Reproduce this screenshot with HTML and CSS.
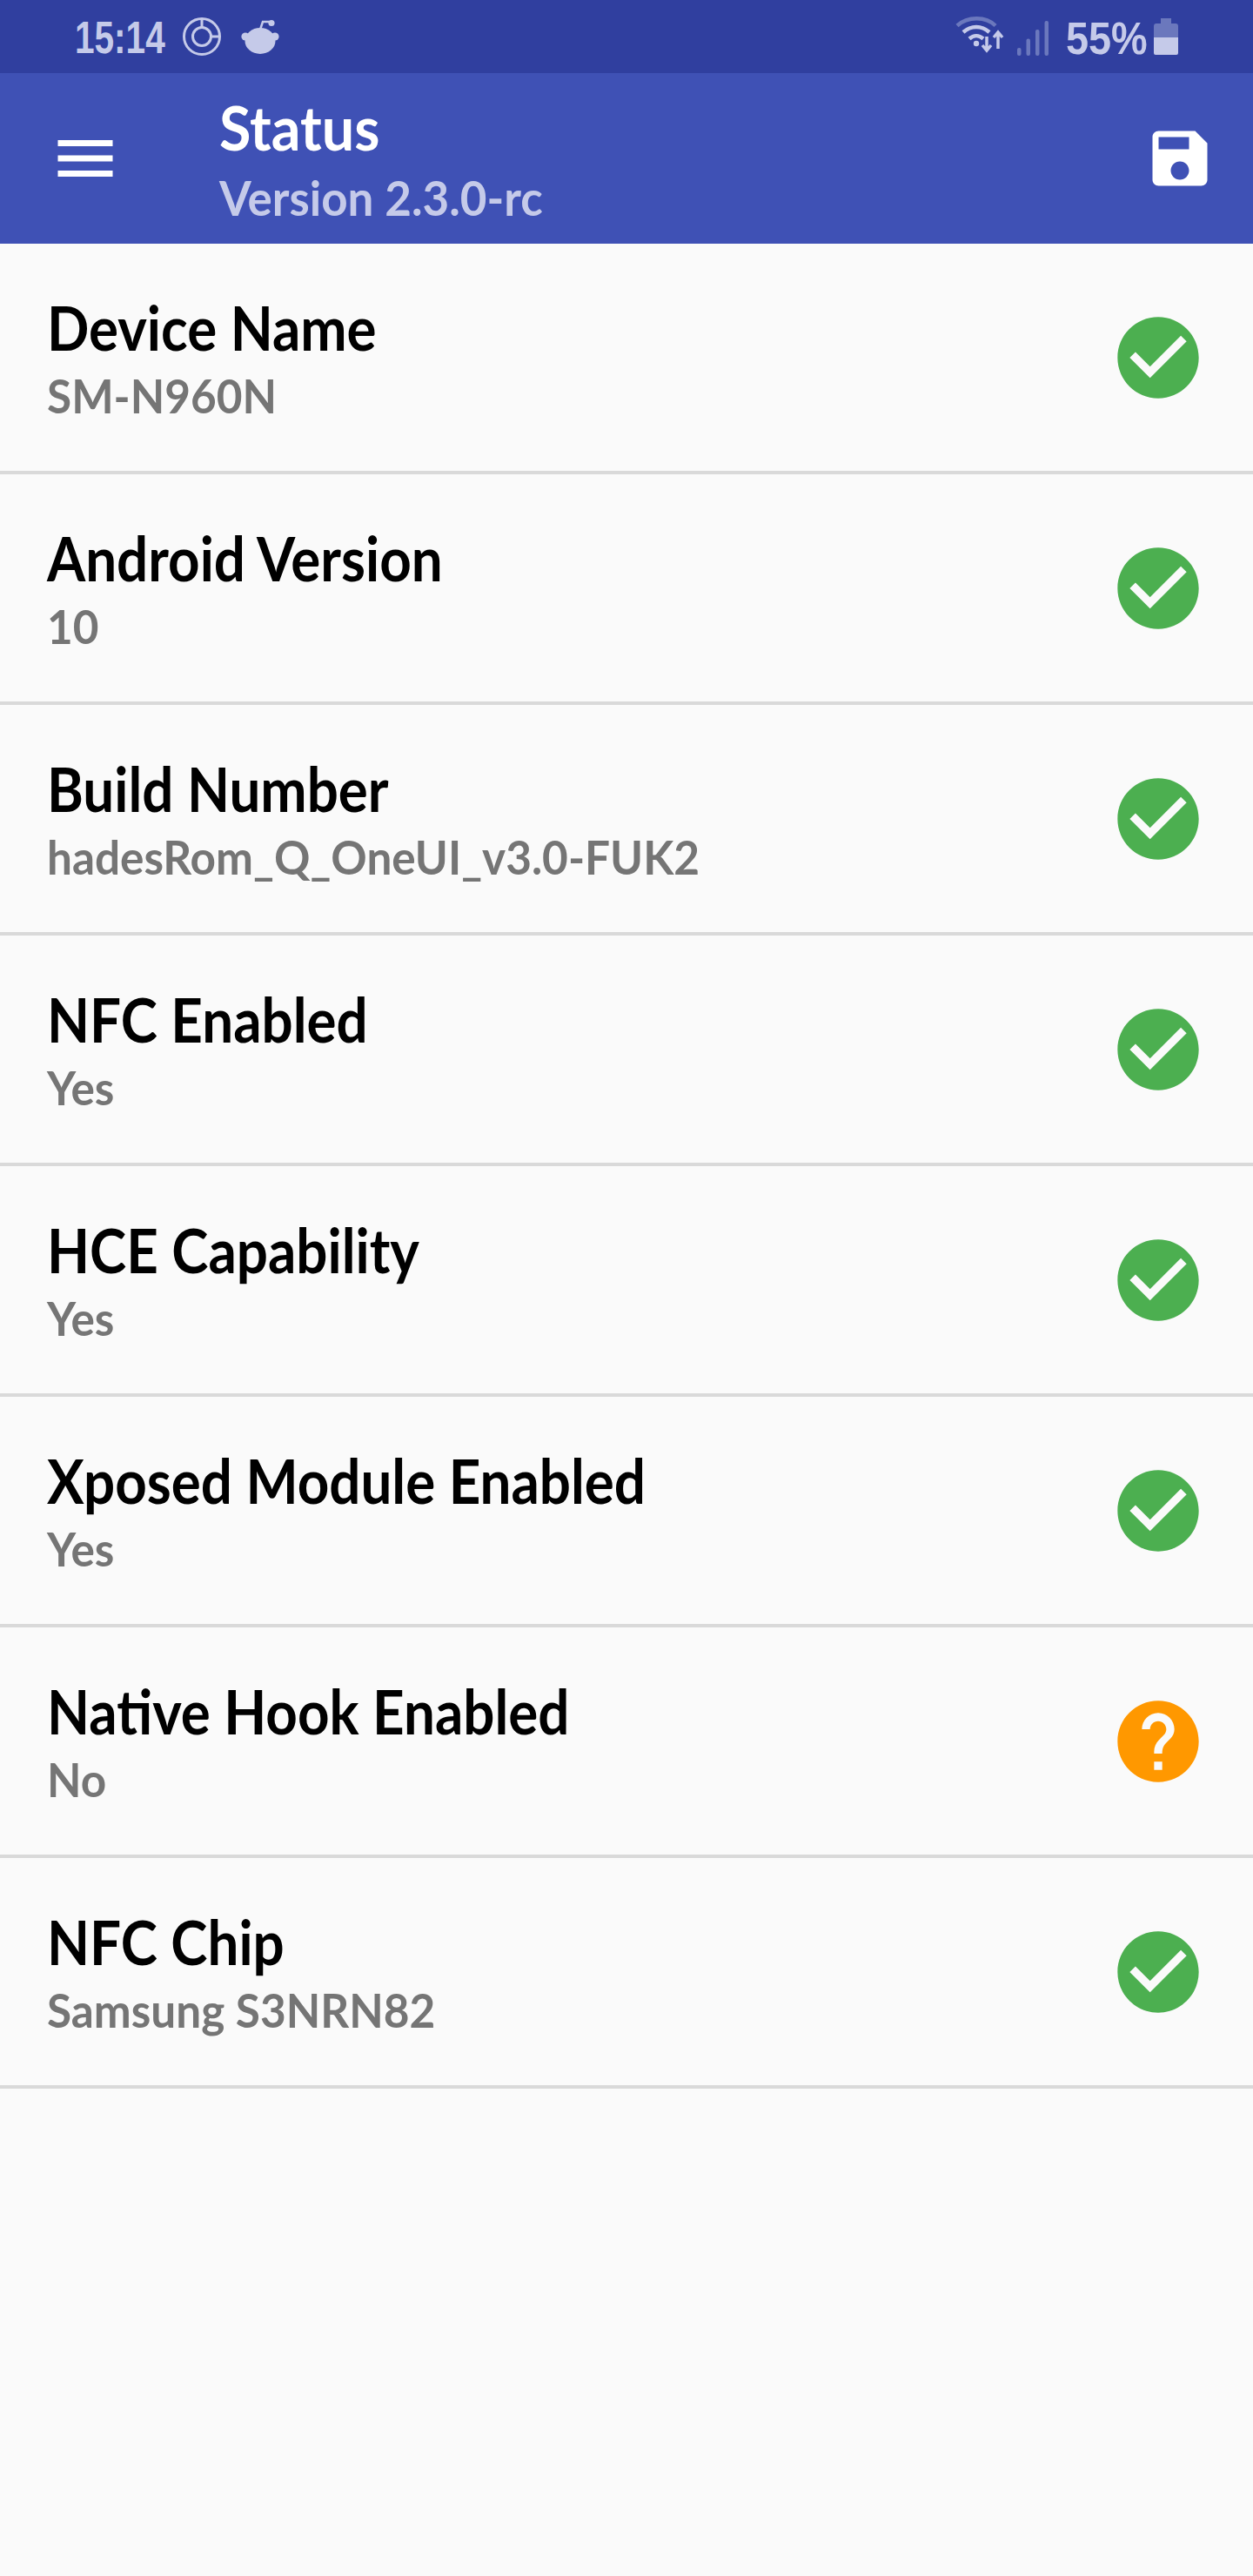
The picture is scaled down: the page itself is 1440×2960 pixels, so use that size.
FILE: index.html
```html
<!DOCTYPE html>
<html lang="en">
<head>
<meta charset="utf-8">
<title>Status</title>
<link rel="stylesheet" href="styles.css">
</head>
<body>
<div class="app">
  <header class="statusbar">
    <div class="status-left">
      <span class="clock">15:14</span>
      <svg class="ic-target" viewBox="0 0 46 46"><circle cx="23" cy="23" r="20.5"/><circle cx="23" cy="23" r="10.5"/><path d="M23 2.5V12.5M33.5 23H43.5"/></svg>
      <svg class="ic-reddit" viewBox="0 0 44 40"><circle cx="5" cy="20" r="4.6"/><circle cx="39" cy="20" r="4.6"/><ellipse cx="22" cy="25" rx="17.5" ry="15"/><path class="antenna" d="M22 12L25 3H33"/><circle cx="35" cy="4.5" r="3.6"/></svg>
    </div>
    <div class="status-right">
      <svg class="ic-wifi" viewBox="0 0 60 44"><path class="arc dim" d="M3 10.5C15-.5 36-.5 47 10.5"/><path class="arc" d="M10 18C19 10 31 10 40 18"/><path class="arc" d="M17 25.5C22 21 28 21 33 25.5"/><circle cx="25" cy="31" r="3.2"/><path class="arrow" d="M37 23V38M32 33L37 39L42 33M50 37V18M45 24L50 18L55 24"/></svg>
      <svg class="ic-signal" viewBox="0 0 37 40"><rect x="0" y="31" width="4.5" height="9" rx="2"/><rect x="10.500" y="20.500" width="4.500" height="19.500" rx="2"/><rect x="21" y="10" width="4.500" height="30" rx="2"/><rect x="31.500" y="0" width="4.500" height="40" rx="2"/></svg>
      <span class="pct">55%</span>
      <svg class="ic-battery" viewBox="0 0 28 42"><path class="dim-fill" d="M8 0H20V6H25Q28 6 28 9V22H0V9Q0 6 3 6H8Z"/><path d="M0 22H28V40Q28 42 26 42H2Q0 42 0 40Z"/></svg>
    </div>
  </header>

  <div class="toolbar">
    <svg class="tb-icon" viewBox="0 0 24 24"><path d="M3 18h18v-2H3v2zm0-5h18v-2H3v2zm0-7v2h18V6H3z"/></svg>
    <div class="tb-titles">
      <div class="tb-title"><span>Status</span></div>
      <div class="tb-sub"><span>Version 2.3.0-rc</span></div>
    </div>
    <svg class="tb-icon" viewBox="0 0 24 24"><path d="M17 3H5c-1.11 0-2 .9-2 2v14c0 1.1.89 2 2 2h14c1.1 0 2-.9 2-2V7l-4-4zm-5 16c-1.66 0-3-1.34-3-3s1.34-3 3-3 3 1.34 3 3-1.34 3-3 3zm3-10H5V5h10v4z"/></svg>
  </div>

  <main class="list">
    <div class="row"><div class="row-text"><div class="row-title"><span>Device Name</span></div><div class="row-sub"><span>SM-N960N</span></div></div><svg class="state ok" viewBox="0 0 24 24"><path d="M12 2C6.48 2 2 6.48 2 12s4.48 10 10 10 10-4.48 10-10S17.52 2 12 2zm-2 15l-5-5 1.41-1.41L10 14.170l7.590-7.590L19 8l-9 9z"/></svg></div>
    <div class="row"><div class="row-text"><div class="row-title"><span>Android Version</span></div><div class="row-sub"><span>10</span></div></div><svg class="state ok" viewBox="0 0 24 24"><path d="M12 2C6.48 2 2 6.48 2 12s4.48 10 10 10 10-4.48 10-10S17.52 2 12 2zm-2 15l-5-5 1.41-1.41L10 14.170l7.590-7.590L19 8l-9 9z"/></svg></div>
    <div class="row"><div class="row-text"><div class="row-title"><span>Build Number</span></div><div class="row-sub"><span>hadesRom_Q_OneUI_v3.0-FUK2</span></div></div><svg class="state ok" viewBox="0 0 24 24"><path d="M12 2C6.48 2 2 6.48 2 12s4.48 10 10 10 10-4.48 10-10S17.52 2 12 2zm-2 15l-5-5 1.41-1.41L10 14.170l7.590-7.590L19 8l-9 9z"/></svg></div>
    <div class="row"><div class="row-text"><div class="row-title"><span>NFC Enabled</span></div><div class="row-sub"><span>Yes</span></div></div><svg class="state ok" viewBox="0 0 24 24"><path d="M12 2C6.48 2 2 6.48 2 12s4.48 10 10 10 10-4.48 10-10S17.52 2 12 2zm-2 15l-5-5 1.41-1.41L10 14.170l7.590-7.590L19 8l-9 9z"/></svg></div>
    <div class="row"><div class="row-text"><div class="row-title"><span>HCE Capability</span></div><div class="row-sub"><span>Yes</span></div></div><svg class="state ok" viewBox="0 0 24 24"><path d="M12 2C6.48 2 2 6.48 2 12s4.48 10 10 10 10-4.48 10-10S17.52 2 12 2zm-2 15l-5-5 1.41-1.41L10 14.170l7.590-7.590L19 8l-9 9z"/></svg></div>
    <div class="row"><div class="row-text"><div class="row-title"><span>Xposed Module Enabled</span></div><div class="row-sub"><span>Yes</span></div></div><svg class="state ok" viewBox="0 0 24 24"><path d="M12 2C6.48 2 2 6.48 2 12s4.48 10 10 10 10-4.48 10-10S17.52 2 12 2zm-2 15l-5-5 1.41-1.41L10 14.170l7.590-7.590L19 8l-9 9z"/></svg></div>
    <div class="row"><div class="row-text"><div class="row-title"><span>Native Hook Enabled</span></div><div class="row-sub"><span>No</span></div></div><svg class="state warn" viewBox="0 0 24 24"><path d="M12 2C6.48 2 2 6.48 2 12s4.48 10 10 10 10-4.48 10-10S17.52 2 12 2zm1 17h-2v-2h2v2zm2.070-7.750l-.9.920C13.450 12.900 13 13.500 13 15h-2v-.5c0-1.100.45-2.100 1.170-2.830l1.240-1.260c.37-.36.59-.86.59-1.410 0-1.100-.9-2-2-2s-2 .9-2 2H8c0-2.210 1.790-4 4-4s4 1.790 4 4c0 .88-.36 1.680-.93 2.250z"/></svg></div>
    <div class="row"><div class="row-text"><div class="row-title"><span>NFC Chip</span></div><div class="row-sub"><span>Samsung S3NRN82</span></div></div><svg class="state ok" viewBox="0 0 24 24"><path d="M12 2C6.48 2 2 6.48 2 12s4.48 10 10 10 10-4.48 10-10S17.52 2 12 2zm-2 15l-5-5 1.41-1.41L10 14.170l7.590-7.590L19 8l-9 9z"/></svg></div>
  </main>
</div>
</body>
</html>
```
FILE: styles.css
```css
* { box-sizing: border-box; }
html, body { margin: 0; padding: 0; }
body { background: #fafafa; font-family: "Lato", "Liberation Sans", sans-serif; }
.app { width: 1440px; height: 2960px; overflow: hidden; background: #fafafa; }

.statusbar {
  height: 84px; background: #303f9f; color: #c5cae9;
  display: flex; justify-content: space-between; align-items: center;
}
.status-left, .status-right { display: flex; align-items: center; }
.status-left { padding-left: 86px; }
.clock, .pct {
  display: inline-block; font-family: "Liberation Sans", sans-serif; font-weight: 700;
  font-size: 52px; line-height: 60px; transform-origin: left center;
}
.clock { width: 100px; transform: scaleX(0.78); margin-top: 2px; }
.pct { width: 93px; transform: scaleX(0.9); margin-top: 4px; margin-left: 19px; }
.ic-target { width: 46px; height: 46px; margin-left: 23px; fill: none; stroke: #c5cae9; stroke-width: 3; }
.ic-reddit { width: 44px; height: 40px; margin-left: 22px; fill: #c5cae9; }
.ic-reddit .antenna { fill: none; stroke: #c5cae9; stroke-width: 2.500; }
.status-right { padding-right: 86px; }
.ic-wifi { width: 60px; height: 44px; fill: #c5cae9; margin-top: -2px; }
.ic-wifi .arc { fill: none; stroke: #c5cae9; stroke-width: 4.500; }
.ic-wifi .dim { stroke: #6b78bd; }
.ic-wifi .arrow { fill: none; stroke: #c5cae9; stroke-width: 3.500; }
.ic-signal { width: 37px; height: 40px; margin-left: 12px; margin-top: 3px; fill: #6b78bd; }
.ic-battery { width: 28px; height: 42px; margin-left: 8px; fill: #c5cae9; }
.ic-battery .dim-fill { fill: #6b78bd; }

.toolbar {
  height: 196px; background: #3f51b5; color: #fff;
  display: flex; align-items: center; padding: 0 42px 0 56px;
}
.tb-icon { width: 84px; height: 84px; fill: #fff; flex: none; }
.tb-titles { flex: 1; padding-left: 112px; padding-top: 5px; }
.tb-title { font-size: 70px; line-height: 80px; font-weight: 700; }
.tb-sub { font-size: 56px; line-height: 72px; margin-top: 5px; color: #c5cae9; font-weight: 700; }
.tb-title span, .tb-sub span, .row-title span, .row-sub span {
  display: inline-block; white-space: nowrap; transform-origin: left center;
}
.tb-title span { transform: scaleX(0.95); }
.tb-sub span { transform: scaleX(0.945); }
.row-title span { transform: scaleX(0.91); }
.row-sub span { transform: scaleX(0.95); }

.row {
  height: 265px; border-bottom: 4px solid #d9d9d9;
  display: flex; align-items: center; justify-content: space-between;
  padding: 0 53px 0 54px;
}
.row-text { min-width: 0; padding-top: 4px; }
.row-title { font-size: 70px; line-height: 80px; color: #000; font-weight: 700; }
.row-sub { font-size: 54px; line-height: 70px; margin-top: 4px; color: #757575; font-weight: 700; }
.state { width: 112px; height: 112px; flex: none; }
.ok { fill: #4caf50; }
.warn { fill: #ff9800; }
```
